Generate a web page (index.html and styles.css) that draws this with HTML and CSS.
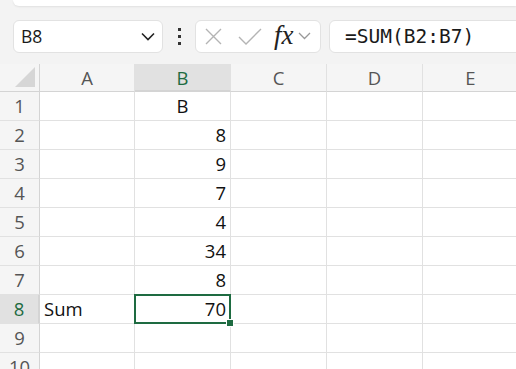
FILE: index.html
```html
<!DOCTYPE html>
<html>
<head>
<meta charset="utf-8">
<link rel="stylesheet" href="styles.css">
</head>
<body>
<div class="top-strip"></div>
<div class="formula-bar">
  <div class="name-box">
    <span class="name-text">B8</span>
    <svg class="chev" width="14" height="9" viewBox="0 0 14 9"><path d="M1 1.5 L7 7.5 L13 1.5" fill="none" stroke="#222" stroke-width="1.6"/></svg>
  </div>
  <div class="dots"><i></i><i></i><i></i></div>
  <div class="fx-box">
    <svg width="17" height="17" viewBox="0 0 17 17"><path d="M1 1 L16 16 M16 1 L1 16" stroke="#b4b4b4" stroke-width="1.4" fill="none"/></svg>
    <svg width="24" height="17" viewBox="0 0 24 17"><path d="M1 9 L8 16 L23 1" stroke="#b4b4b4" stroke-width="1.4" fill="none"/></svg>
    <span class="fx">fx</span>
    <svg width="13" height="8" viewBox="0 0 13 8"><path d="M1 1 L6.5 6.5 L12 1" fill="none" stroke="#999" stroke-width="1.3"/></svg>
  </div>
  <div class="formula-box">=SUM(B2:B7)</div>
</div>
<div class="sheet">
  <div class="hd corner"><span class="tri"></span></div>
  <div class="hd col">A</div>
  <div class="hd col sel-col">B</div>
  <div class="hd col">C</div>
  <div class="hd col">D</div>
  <div class="hd col">E</div>

  <div class="hd row">1</div><div class="c"></div><div class="c ctr">B</div><div class="c"></div><div class="c"></div><div class="c"></div>
  <div class="hd row">2</div><div class="c"></div><div class="c num">8</div><div class="c"></div><div class="c"></div><div class="c"></div>
  <div class="hd row">3</div><div class="c"></div><div class="c num">9</div><div class="c"></div><div class="c"></div><div class="c"></div>
  <div class="hd row">4</div><div class="c"></div><div class="c num">7</div><div class="c"></div><div class="c"></div><div class="c"></div>
  <div class="hd row">5</div><div class="c"></div><div class="c num">4</div><div class="c"></div><div class="c"></div><div class="c"></div>
  <div class="hd row">6</div><div class="c"></div><div class="c num">34</div><div class="c"></div><div class="c"></div><div class="c"></div>
  <div class="hd row">7</div><div class="c"></div><div class="c num">8</div><div class="c"></div><div class="c"></div><div class="c"></div>
  <div class="hd row sel-row">8</div><div class="c">Sum</div><div class="c num active">70<span class="handle"></span></div><div class="c"></div><div class="c"></div><div class="c"></div>
  <div class="hd row">9</div><div class="c"></div><div class="c"></div><div class="c"></div><div class="c"></div><div class="c"></div>
  <div class="hd row">10</div><div class="c"></div><div class="c"></div><div class="c"></div><div class="c"></div><div class="c"></div>
</div>
</body>
</html>
```
FILE: styles.css
```css
html, body {
  margin: 0;
  padding: 0;
  background: #f3f3f3;
  overflow: hidden;
  width: 516px;
  height: 369px;
  font-family: "Open Sans", "Noto Sans", sans-serif;
}
.top-strip {
  height: 6px;
  margin-left: 13px;
  background: #fff;
  border-radius: 0 0 0 9px;
  box-shadow: 0 1px 2px rgba(0,0,0,0.08);
}
.formula-bar {
  display: flex;
  align-items: center;
  height: 34px;
  margin-top: 13px;
  padding-left: 13px;
}
.name-box {
  width: 150px;
  height: 33px;
  box-sizing: border-box;
  background: #fff;
  border: 1px solid #e2e2e2;
  border-radius: 6px;
  display: flex;
  align-items: center;
  justify-content: space-between;
  padding: 0 7px 0 7px;
  flex: none;
}
.name-text {
  font-size: 17.5px;
  color: #1a1a1a;
  font-family: "Open Sans", sans-serif;
}
.chev { margin-top: 1px; }
.dots {
  width: 32px;
  flex: none;
  display: flex;
  flex-direction: column;
  align-items: center;
  gap: 4px;
}
.dots i {
  display: block;
  width: 3px;
  height: 3px;
  background: #333;
}
.fx-box {
  width: 126px;
  height: 33px;
  box-sizing: border-box;
  background: #fff;
  border: 1px solid #e2e2e2;
  border-radius: 6px;
  display: flex;
  align-items: center;
  padding-left: 9px;
  gap: 0;
  flex: none;
}
.fx-box svg:nth-child(1) { margin-right: 16px; }
.fx-box svg:nth-child(2) { margin-right: 12px; }
.fx {
  font-family: "Liberation Serif", "DejaVu Serif", serif;
  font-style: italic;
  font-size: 27px;
  color: #222;
  margin-right: 4px;
  line-height: 1;
  margin-top: -2px;
}
.formula-box {
  margin-left: 8px;
  height: 33px;
  flex: 1;
  margin-right: -10px;
  box-sizing: border-box;
  background: #fff;
  border: 1px solid #e2e2e2;
  border-radius: 6px;
  display: flex;
  align-items: center;
  padding-left: 15px;
  font-family: "DejaVu Sans Mono", "Liberation Mono", monospace;
  font-size: 19.5px;
  color: #1a1a1a;
}
.sheet {
  margin-top: 11px;
  display: grid;
  grid-template-columns: 40px 95px 96px 96px 96px 96px;
  grid-template-rows: 28px repeat(10, 29px);
  width: 519px;
}
.sheet > div {
  box-sizing: border-box;
  border-right: 1px solid #e1e1e1;
  border-bottom: 1px solid #e1e1e1;
  font-size: 18.5px;
  line-height: 28px;
  color: #111;
}
.hd {
  background: #f5f5f5;
  color: #555 !important;
  text-align: center;
}
.hd.col {
  border-bottom-color: #d4d4d4 !important;
}
.hd.row {
  border-right-color: #d4d4d4 !important;
  background: #f5f5f5;
}
.corner {
  position: relative;
  border-right-color: #d4d4d4 !important;
  border-bottom-color: #d4d4d4 !important;
}
.tri {
  position: absolute;
  right: 4px;
  bottom: 4px;
  width: 0;
  height: 0;
  border-left: 20px solid transparent;
  border-bottom: 20px solid #d6d6d6;
}
.sel-col {
  background: #e1e1e1 !important;
  color: #1e6b41 !important;
  border-bottom: 2px solid #1e6b41 !important;
}
.sel-row {
  background: #e1e1e1 !important;
  color: #1e6b41 !important;
  border-right: 2px solid #1e6b41 !important;
}
.c {
  background: #fff;
  padding: 0 4px;
  white-space: nowrap;
}
.ctr { text-align: center; }
.num { text-align: right; }
.active {
  position: relative;
}
.active::after {
  content: "";
  position: absolute;
  left: -1px;
  top: -1px;
  right: -1px;
  bottom: -1px;
  border: 2px solid #1e6b41;
}
.handle {
  position: absolute;
  right: -4px;
  bottom: -4px;
  width: 6px;
  height: 6px;
  background: #1e6b41;
  border: 1px solid #fff;
  z-index: 2;
}
```
